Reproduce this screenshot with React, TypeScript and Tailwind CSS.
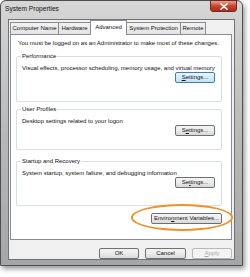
import React from "react";

const font = { fontFamily: '"Liberation Sans", Arial, sans-serif' };

function Btn({
  children,
  w,
  variant = "normal",
}: {
  children: React.ReactNode;
  w: string;
  variant?: "normal" | "focus" | "disabled";
}) {
  const base =
    "h-[11px] flex items-center justify-center rounded-[2px] border text-[6px] leading-[7px] ";
  const v =
    variant === "focus"
      ? "border-[#3c7fb1] bg-gradient-to-b from-[#eaf6fd] to-[#bfe4f7] text-[#111]"
      : variant === "disabled"
      ? "border-[#b5b8ba] bg-[#f4f4f4] text-[#a8a8a8]"
      : "border-[#707070] bg-gradient-to-b from-[#f4f4f4] via-[#ebebeb] to-[#d8d8d8] text-[#111]";
  return <div className={base + v + " " + w}>{children}</div>;
}

function Group({
  title,
  text,
  btn,
  mt,
  h,
}: {
  title: string;
  text: string;
  btn: React.ReactNode;
  mt: string;
  h: string;
}) {
  return (
    <fieldset
      className={
        "ml-[5px] mr-[9px] border border-[#d5dfe5] rounded-[2px] flex flex-col " + mt + " " + h
      }
    >
      <legend className="ml-[4px] px-[1px] text-[6px] leading-[7px] text-[#111]">{title}</legend>
      <div className="ml-[5px] mt-[5px] text-[6px] leading-[7px] text-[#111] whitespace-nowrap">
        {text}
      </div>
      <div className="flex-1" />
      <div className="flex justify-end mr-[6px] mb-[6px]">{btn}</div>
    </fieldset>
  );
}

export default function App() {
  return (
    <div className="w-[250px] h-[277px] bg-white overflow-hidden" style={font}>
      <div className="w-[243px] h-[266px] flex flex-col rounded-t-[6px] border border-[#4a4f55] bg-gradient-to-b from-[#d6d6d6] via-[#b9b9b9] to-[#a6a6a6] shadow-[2px_3px_5px_rgba(0,0,0,0.4)] relative">
        {/* title bar */}
        <div className="h-[19px] flex items-start pt-[4px] pl-[4px] text-[6.6px] leading-[8px] text-[#111]">
          System Properties
        </div>
        <div className="absolute top-[-1px] right-[5px] w-[27px] h-[12px] rounded-b-[3px] border border-[#6b2a22] bg-gradient-to-b from-[#e8a08f] via-[#c9432f] to-[#b32a18] flex items-center justify-center">
          <svg width="8" height="7" viewBox="0 0 8 7">
            <path d="M1 0.8 L7 6.2 M7 0.8 L1 6.2" stroke="#fff" strokeWidth="1.6" strokeLinecap="round" />
          </svg>
        </div>
        {/* client */}
        <div className="mx-[7px] mb-[5px] flex-1 border border-[#6e7378] bg-[#f0f0f0] flex flex-col">
          {/* tabs */}
          <div className="ml-[1px] h-[14px] flex items-end relative z-10 text-[6px] leading-[7px] text-[#111]">
            <div className="w-[49px] h-[12px] border border-[#898c95] border-b-0 bg-gradient-to-b from-[#f3f3f3] to-[#e3e3e3] flex items-center justify-center">
              Computer Name
            </div>
            <div className="w-[32px] h-[12px] border border-l-0 border-[#898c95] border-b-0 bg-gradient-to-b from-[#f3f3f3] to-[#e3e3e3] flex items-center justify-center">
              Hardware
            </div>
            <div className="w-[37px] h-[15px] -ml-[1px] border border-[#898c95] border-b-0 bg-white flex items-start pt-[3px] justify-center -mb-[1px]">
              Advanced
            </div>
            <div className="w-[55px] h-[12px] -ml-[1px] border border-[#898c95] border-b-0 bg-gradient-to-b from-[#f3f3f3] to-[#e3e3e3] flex items-center justify-center">
              System Protection
            </div>
            <div className="w-[25px] h-[12px] border border-l-0 border-[#898c95] border-b-0 bg-gradient-to-b from-[#f3f3f3] to-[#e3e3e3] flex items-center justify-center">
              Remote
            </div>
          </div>
          {/* panel */}
          <div className="ml-[1px] mr-[2px] h-[206px] border border-[#898c95] bg-white flex flex-col">
            <div className="ml-[7px] mt-[5px] text-[6px] leading-[7px] text-[#111] whitespace-nowrap">
              You must be logged on as an Administrator to make most of these changes.
            </div>
            <Group
              mt="mt-[6px]"
              h="h-[49px]"
              title="Performance"
              text="Visual effects, processor scheduling, memory usage, and virtual memory"
              btn={
                <Btn w="w-[40px]" variant="focus">
                  <span>
                    <span className="underline">S</span>ettings...
                  </span>
                </Btn>
              }
            />
            <Group
              mt="mt-[4px]"
              h="h-[44px]"
              title="User Profiles"
              text="Desktop settings related to your logon"
              btn={
                <Btn w="w-[40px]">
                  <span>
                    S<span className="underline">e</span>ttings...
                  </span>
                </Btn>
              }
            />
            <Group
              mt="mt-[8px]"
              h="h-[48px]"
              title="Startup and Recovery"
              text="System startup, system failure, and debugging information"
              btn={
                <Btn w="w-[40px]">
                  <span>
                    Se<span className="underline">t</span>tings...
                  </span>
                </Btn>
              }
            />
            <div className="flex justify-end mr-[9px] mt-[7px]">
              <div className="relative">
                <Btn w="w-[71px]">
                  <span>
                    Enviro<span className="underline">n</span>ment Variables...
                  </span>
                </Btn>
                <div className="absolute -left-[20px] -right-[11px] -top-[9px] -bottom-[7px] rounded-[50%] border-[2px] border-[#f0902c]" />
              </div>
            </div>
          </div>
          {/* bottom buttons */}
          <div className="flex justify-end gap-[6px] mr-[2px] mt-[8px]">
            <Btn w="w-[40px]">OK</Btn>
            <Btn w="w-[41px]">Cancel</Btn>
            <Btn w="w-[40px]" variant="disabled">
              <span>
                <span className="underline">A</span>pply
              </span>
            </Btn>
          </div>
        </div>
      </div>
    </div>
  );
}
